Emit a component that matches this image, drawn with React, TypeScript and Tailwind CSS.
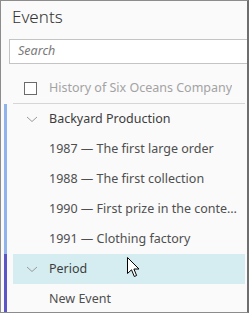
import React from "react";

const Chevron = () => (
  <svg width="12" height="7" viewBox="0 0 12 7" className="block">
    <path d="M1 1 L6 5.5 L11 1" fill="none" stroke="#9a9a9a" strokeWidth="1" />
  </svg>
);

const Cursor = () => (
  <svg width="14" height="21" viewBox="0 0 14 21" className="block">
    <path
      d="M0.5 0.5 L0.5 16.5 L4.5 12.8 L7.3 19.5 L9.6 18.5 L6.9 12 L12 12 Z"
      fill="#ffffff"
      stroke="#000000"
      strokeWidth="1"
      strokeLinejoin="miter"
    />
  </svg>
);

type Row = { text: string; chevron?: boolean; dark?: boolean; highlight?: boolean };

const RowItem = ({ r }: { r: Row }) => (
  <div
    className={
      "relative flex h-[30px] items-center " + (r.highlight ? "bg-[#d5edf1]" : "")
    }
  >
    <div className="flex w-[36px] shrink-0 items-center justify-center pl-[1px]">
      {r.chevron ? <Chevron /> : null}
    </div>
    <div
      className={
        "min-w-0 flex-1 truncate pr-[5px] text-[12.5px] " +
        (r.dark ? "text-[#3d3d3d]" : "text-[#4f4f4f]")
      }
    >
      {r.text}
    </div>
    {r.highlight ? (
      <div className="absolute left-[114px] top-[3px]">
        <Cursor />
      </div>
    ) : null}
  </div>
);

export default function App() {
  const group1: Row[] = [
    { text: "Backyard Production", chevron: true, dark: true },
    { text: "1987 — The first large order" },
    { text: "1988 — The first collection" },
    { text: "1990 — First prize in the contest of young designers" },
    { text: "1991 — Clothing factory" },
  ];
  const group2: Row[] = [
    { text: "Period", chevron: true, dark: true, highlight: true },
    { text: "New Event" },
  ];
  return (
    <div
      className="relative h-[313px] w-[249px] overflow-hidden border-l border-t border-b border-r-2 border-l-[#8c8c8c] border-t-[#8c8c8c] border-b-[#8c8c8c] border-r-[#6e6e6e] bg-[#fafafa]"
      style={{ fontFamily: '"Noto Sans", "Open Sans", sans-serif' }}
    >
      <div className="pl-[11px] pt-[3px] text-[17px] font-light leading-[26px] text-[#333333]">Events</div>
      <div className="ml-[8px] mt-[9px] flex h-[25px] w-[260px] items-center border border-[#c4c4c4] bg-white pl-[8px] text-[12.5px] italic text-[#7a7a7a]">
        Search
      </div>
      <div className="mt-[9px]">
        <div className="ml-[12px] mr-[2px] flex h-[31px] items-center border-b border-[#d6d6d6]">
          <div className="flex w-[36px] shrink-0 items-center justify-center pr-[1px]">
            <div className="h-[13px] w-[13px] border border-[#6b6b6b] bg-white" />
          </div>
          <div className="truncate text-[12.5px] text-[#a3a3a3]">History of Six Oceans Company</div>
        </div>
        <div className="flex">
          <div className="ml-[3px] w-[3px] shrink-0 bg-[#8fb3ea]" />
          <div className="ml-[6px] mr-[2px] min-w-0 flex-1">
            {group1.map((r) => (
              <RowItem key={r.text} r={r} />
            ))}
          </div>
        </div>
        <div className="flex">
          <div className="ml-[3px] w-[3px] shrink-0 bg-[#5b55c6]" />
          <div className="ml-[6px] mr-[2px] min-w-0 flex-1">
            {group2.map((r) => (
              <RowItem key={r.text} r={r} />
            ))}
          </div>
        </div>
      </div>
    </div>
  );
}
